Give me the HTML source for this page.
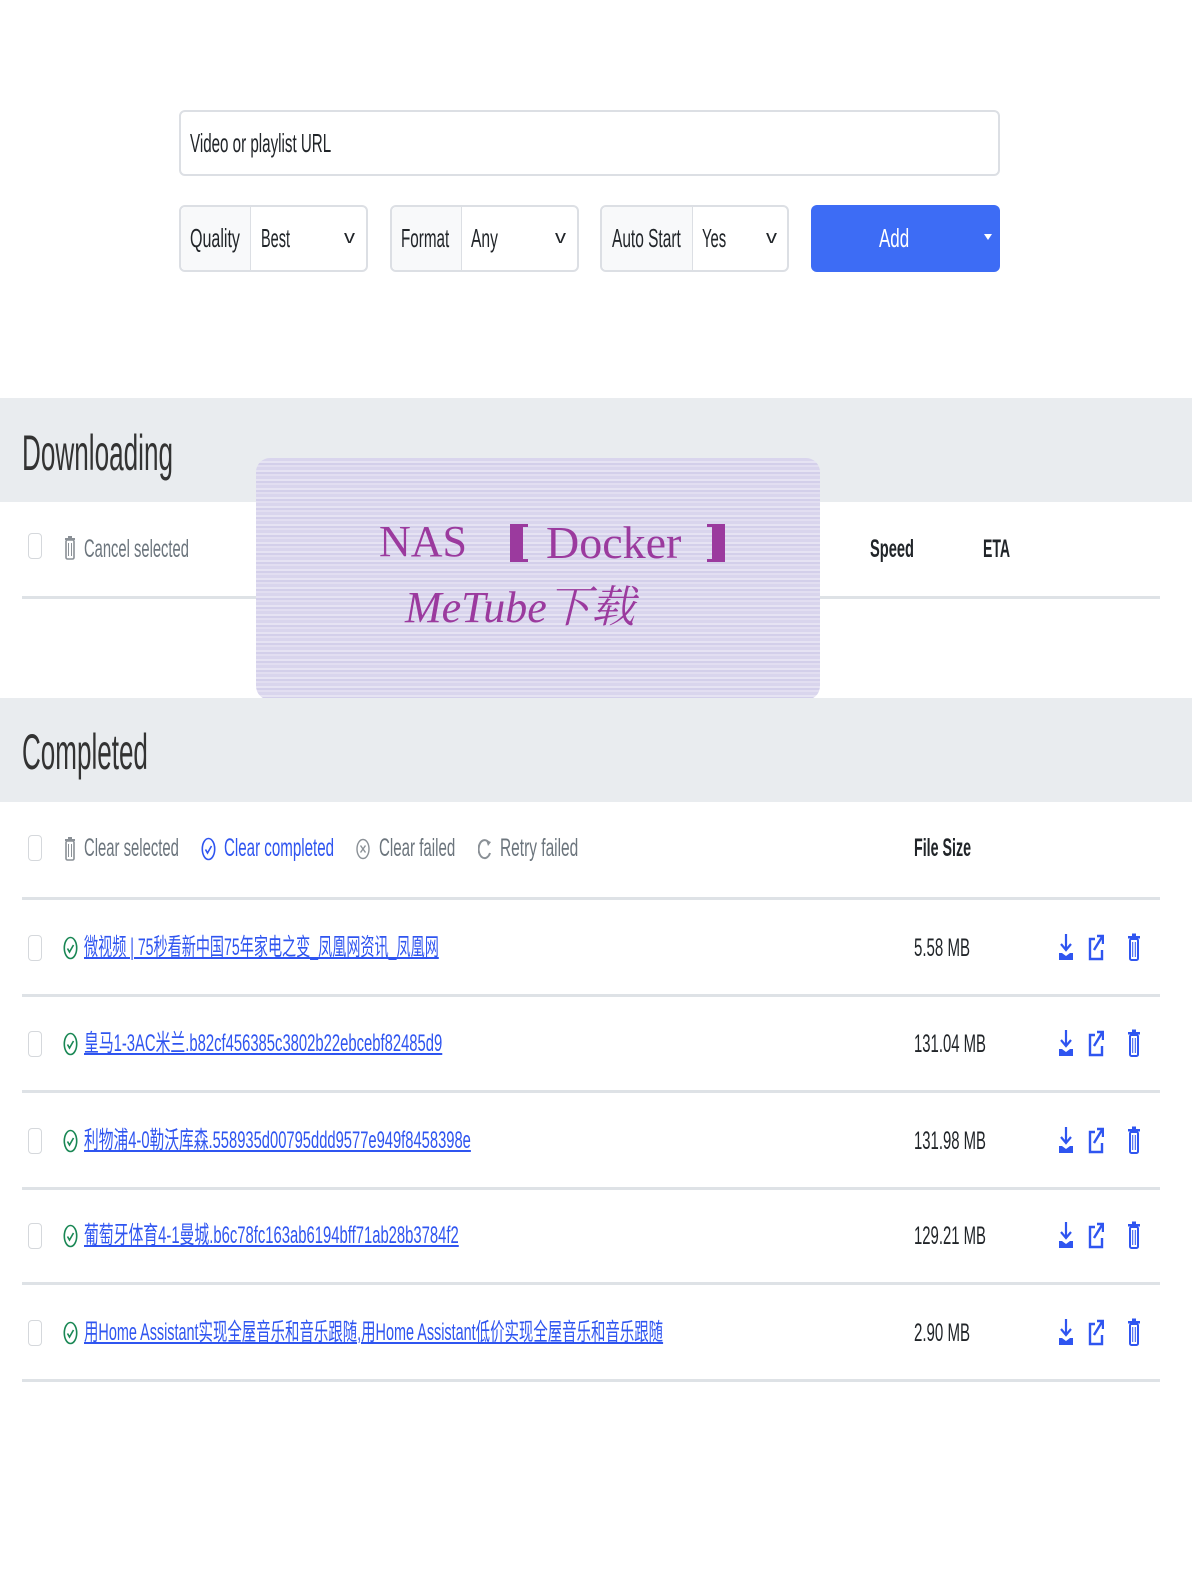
<!DOCTYPE html>
<html><head><meta charset="utf-8"><style>
*{box-sizing:border-box;margin:0;padding:0}
body{width:1192px;height:1589px;position:relative;background:#fff;font-family:"Liberation Sans","Noto Sans CJK SC",sans-serif;overflow:hidden;color:#212529}
.a{position:absolute}
.f{position:absolute;white-space:nowrap;transform-origin:0 50%;line-height:1}
.box{position:absolute;border:2px solid #dcdfe4;border-radius:6px;background:#fff}
.lab{position:absolute;top:0;bottom:0;left:0;background:#f8f9fa;border-right:1px solid #dcdfe4;border-radius:5px 0 0 5px}
.band{position:absolute;left:0;width:1192px;height:104px;background:#e9ecef}
.line{position:absolute;left:22px;width:1138px;height:3px;background:#dee2e6}
.cb{position:absolute;width:14px;height:26px;border:1.5px solid #d5d8dc;border-radius:4px;background:#fff}
a{color:#2f55f0;text-decoration:underline}
.gray{color:#6c757d}
.s{position:absolute;font-family:'Liberation Serif','Noto Serif CJK SC',serif;color:#9b3a9e;line-height:1;white-space:nowrap}
</style></head><body>

<div class="box" style="left:179px;top:110px;width:821px;height:66px"></div>
<div class="f" style="left:190px;top:130px;font-size:26px;--w:141px">Video or playlist URL</div>

<div class="box" style="left:179px;top:205px;width:189px;height:67px"><div class="lab" style="width:70px"></div></div>
<div class="f" style="left:190px;top:225px;font-size:26px;--w:50px">Quality</div>
<div class="f" style="left:261px;top:225px;font-size:26px;--w:29px">Best</div>
<div class="f" style="left:344px;top:228px;font-size:18px;--w:11px">v</div>

<div class="box" style="left:390px;top:205px;width:189px;height:67px"><div class="lab" style="width:70px"></div></div>
<div class="f" style="left:401px;top:225px;font-size:26px;--w:48px">Format</div>
<div class="f" style="left:471px;top:225px;font-size:26px;--w:27px">Any</div>
<div class="f" style="left:555px;top:228px;font-size:18px;--w:11px">v</div>

<div class="box" style="left:600px;top:205px;width:189px;height:67px"><div class="lab" style="width:91px"></div></div>
<div class="f" style="left:612px;top:225px;font-size:26px;--w:69px">Auto Start</div>
<div class="f" style="left:702px;top:225px;font-size:26px;--w:24px">Yes</div>
<div class="f" style="left:766px;top:228px;font-size:18px;--w:11px">v</div>

<div class="a" style="left:811px;top:205px;width:189px;height:67px;background:#3d6cf5;border-radius:6px"></div>
<div class="f" style="left:879px;top:225px;font-size:26px;color:#fff;--w:30px">Add</div>
<div class="a" style="left:984px;top:234px;width:0;height:0;border-left:4px solid transparent;border-right:4px solid transparent;border-top:6px solid #fff"></div>

<div class="band" style="top:398px"></div>
<div class="f" style="left:22px;top:428px;font-size:50px;color:#333;--w:151px">Downloading</div>
<div class="cb" style="left:28px;top:533px"></div>
<svg class="a" style="left:64px;top:535px" width="12" height="25" viewBox="0 0 12 25"><rect x="2" y="5" width="8" height="19" rx="1.5" fill="none" stroke="#8a9096" stroke-width="1.6"/><rect x="1" y="3" width="10" height="2" fill="#8a9096"/><rect x="4" y="1" width="4" height="2" fill="#8a9096"/><path d="M4.5 8v13M7.5 8v13" stroke="#8a9096"/></svg>
<div class="f gray" style="left:84px;top:537px;font-size:25px;--w:105px">Cancel selected</div>
<div class="f" style="left:870px;top:537px;font-size:25px;font-weight:bold;--w:44px">Speed</div>
<div class="f" style="left:983px;top:537px;font-size:25px;font-weight:bold;--w:27px">ETA</div>
<div class="line" style="top:596px"></div>

<div class="a" style="left:256px;top:458px;width:564px;height:242px;border-radius:14px;background:repeating-linear-gradient(180deg,#d9d5ed 0 3px,#e6e3f3 3px 5px,#d3cfea 5px 7px,#e2def1 7px 9px)"></div>
<div class="s" style="left:379px;top:520px;font-size:44px">NAS</div>
<div class="a" style="left:510px;top:524px;width:13px;height:38px;background:#9b3a9e"></div>
<div class="a" style="left:523px;top:524px;width:5px;height:3px;background:#9b3a9e"></div>
<div class="a" style="left:523px;top:559px;width:5px;height:3px;background:#9b3a9e"></div>
<div class="s" style="left:546px;top:520px;font-size:46px">Docker</div>
<div class="a" style="left:712px;top:524px;width:13px;height:38px;background:#9b3a9e"></div>
<div class="a" style="left:707px;top:524px;width:5px;height:3px;background:#9b3a9e"></div>
<div class="a" style="left:707px;top:559px;width:5px;height:3px;background:#9b3a9e"></div>
<div class="s" style="left:405px;top:586px;font-size:44px;font-style:italic">MeTube下载</div>

<div class="band" style="top:698px"></div>
<div class="f" style="left:22px;top:727px;font-size:50px;color:#333;--w:126px">Completed</div>
<div class="cb" style="left:28px;top:835px"></div>
<svg class="a" style="left:64px;top:836px" width="12" height="25" viewBox="0 0 12 25"><rect x="2" y="5" width="8" height="19" rx="1.5" fill="none" stroke="#8a9096" stroke-width="1.6"/><rect x="1" y="3" width="10" height="2" fill="#8a9096"/><rect x="4" y="1" width="4" height="2" fill="#8a9096"/><path d="M4.5 8v13M7.5 8v13" stroke="#8a9096"/></svg>
<div class="f gray" style="left:84px;top:836px;font-size:25px;--w:95px">Clear selected</div>
<svg class="a" style="left:201px;top:837px" width="15" height="24" viewBox="0 0 15 24"><ellipse cx="7.5" cy="12" rx="6.2" ry="10.5" fill="none" stroke="#2f55f0" stroke-width="1.6"/><path d="M4.5 12.5l2 3.5 4-7" fill="none" stroke="#2f55f0" stroke-width="1.6"/></svg>
<div class="f" style="left:224px;top:836px;font-size:25px;color:#2f55f0;--w:110px">Clear completed</div>
<svg class="a" style="left:356px;top:838px" width="14" height="22" viewBox="0 0 14 22"><ellipse cx="7" cy="11" rx="6" ry="9.5" fill="none" stroke="#8a9096" stroke-width="1.4"/><path d="M4.5 7.5l5 7M9.5 7.5l-5 7" stroke="#8a9096" stroke-width="1.4"/></svg>
<div class="f gray" style="left:379px;top:836px;font-size:25px;--w:76px">Clear failed</div>
<svg class="a" style="left:478px;top:837px" width="14" height="24" viewBox="0 0 14 24"><path d="M11 6A6 9 0 1 0 12 16" fill="none" stroke="#8a9096" stroke-width="2"/><path d="M8 3l5 2-3 4z" fill="#8a9096"/></svg>
<div class="f gray" style="left:500px;top:836px;font-size:25px;--w:78px">Retry failed</div>
<div class="f" style="left:914px;top:836px;font-size:25px;font-weight:bold;--w:57px">File Size</div>
<div class="line" style="top:897px"></div>

<div id="rows"></div>

<script>
var rows=[
["微视频 | 75秒看新中国75年家电之变_凤凰网资讯_凤凰网",355,"5.58 MB",56],
["皇马1-3AC米兰.b82cf456385c3802b22ebcebf82485d9",358,"131.04 MB",72],
["利物浦4-0勒沃库森.558935d00795ddd9577e949f8458398e",387,"131.98 MB",72],
["葡萄牙体育4-1曼城.b6c78fc163ab6194bff71ab28b3784f2",375,"129.21 MB",72],
["用Home Assistant实现全屋音乐和音乐跟随,用Home Assistant低价实现全屋音乐和音乐跟随",579,"2.90 MB",56]];
var tops=[948,1044,1141,1236,1333],h="";
rows.forEach(function(r,i){var c=tops[i];
h+='<div class="cb" style="left:28px;top:'+(c-13)+'px"></div>';
h+='<svg class="a" style="left:63px;top:'+(c-12)+'px" width="15" height="24" viewBox="0 0 15 24"><ellipse cx="7.5" cy="12" rx="6.2" ry="10.5" fill="none" stroke="#198754" stroke-width="1.6"/><path d="M4.5 12.5l2 3.5 4-7" fill="none" stroke="#198754" stroke-width="1.6"/></svg>';
h+='<div class="f" style="left:84px;top:'+(c-12)+'px;font-size:24px;--w:'+r[1]+'px"><a>'+r[0]+'</a></div>';
h+='<div class="f" style="left:914px;top:'+(c-12)+'px;font-size:25px;--w:'+r[3]+'px">'+r[2]+'</div>';
h+='<svg class="a" style="left:1058px;top:'+(c-15)+'px" width="16" height="28" viewBox="0 0 16 28"><path d="M8 1v15M3 11l5 6 5-6" fill="none" stroke="#2f55f0" stroke-width="2.2"/><path d="M1 20h3l4 3 4-3h3v7H1z" fill="#2f55f0"/></svg>';
h+='<svg class="a" style="left:1088px;top:'+(c-15)+'px" width="16" height="28" viewBox="0 0 16 28"><path d="M7 6H2v20h12v-9" fill="none" stroke="#2f55f0" stroke-width="2.4"/><path d="M6 17l8-13M9 3h6v8" fill="none" stroke="#2f55f0" stroke-width="2.4"/></svg>';
h+='<svg class="a" style="left:1128px;top:'+(c-15)+'px" width="12" height="28" viewBox="0 0 12 28"><rect x="2" y="6" width="8" height="21" rx="1.5" fill="none" stroke="#2f55f0" stroke-width="2"/><rect x="0" y="3" width="12" height="2.5" fill="#2f55f0"/><rect x="4" y="0.5" width="4" height="3" fill="#2f55f0"/><path d="M4.7 9v15M7.3 9v15" stroke="#2f55f0"/></svg>';
h+='<div class="line" style="top:'+(c+46)+'px"></div>';});
document.getElementById('rows').innerHTML=h;
document.querySelectorAll('.f').forEach(function(e){var w=parseFloat(getComputedStyle(e).getPropertyValue('--w'));if(w){var n=e.scrollWidth;e.style.transform='scaleX('+(w/n)+')';}});
</script>
</body></html>
